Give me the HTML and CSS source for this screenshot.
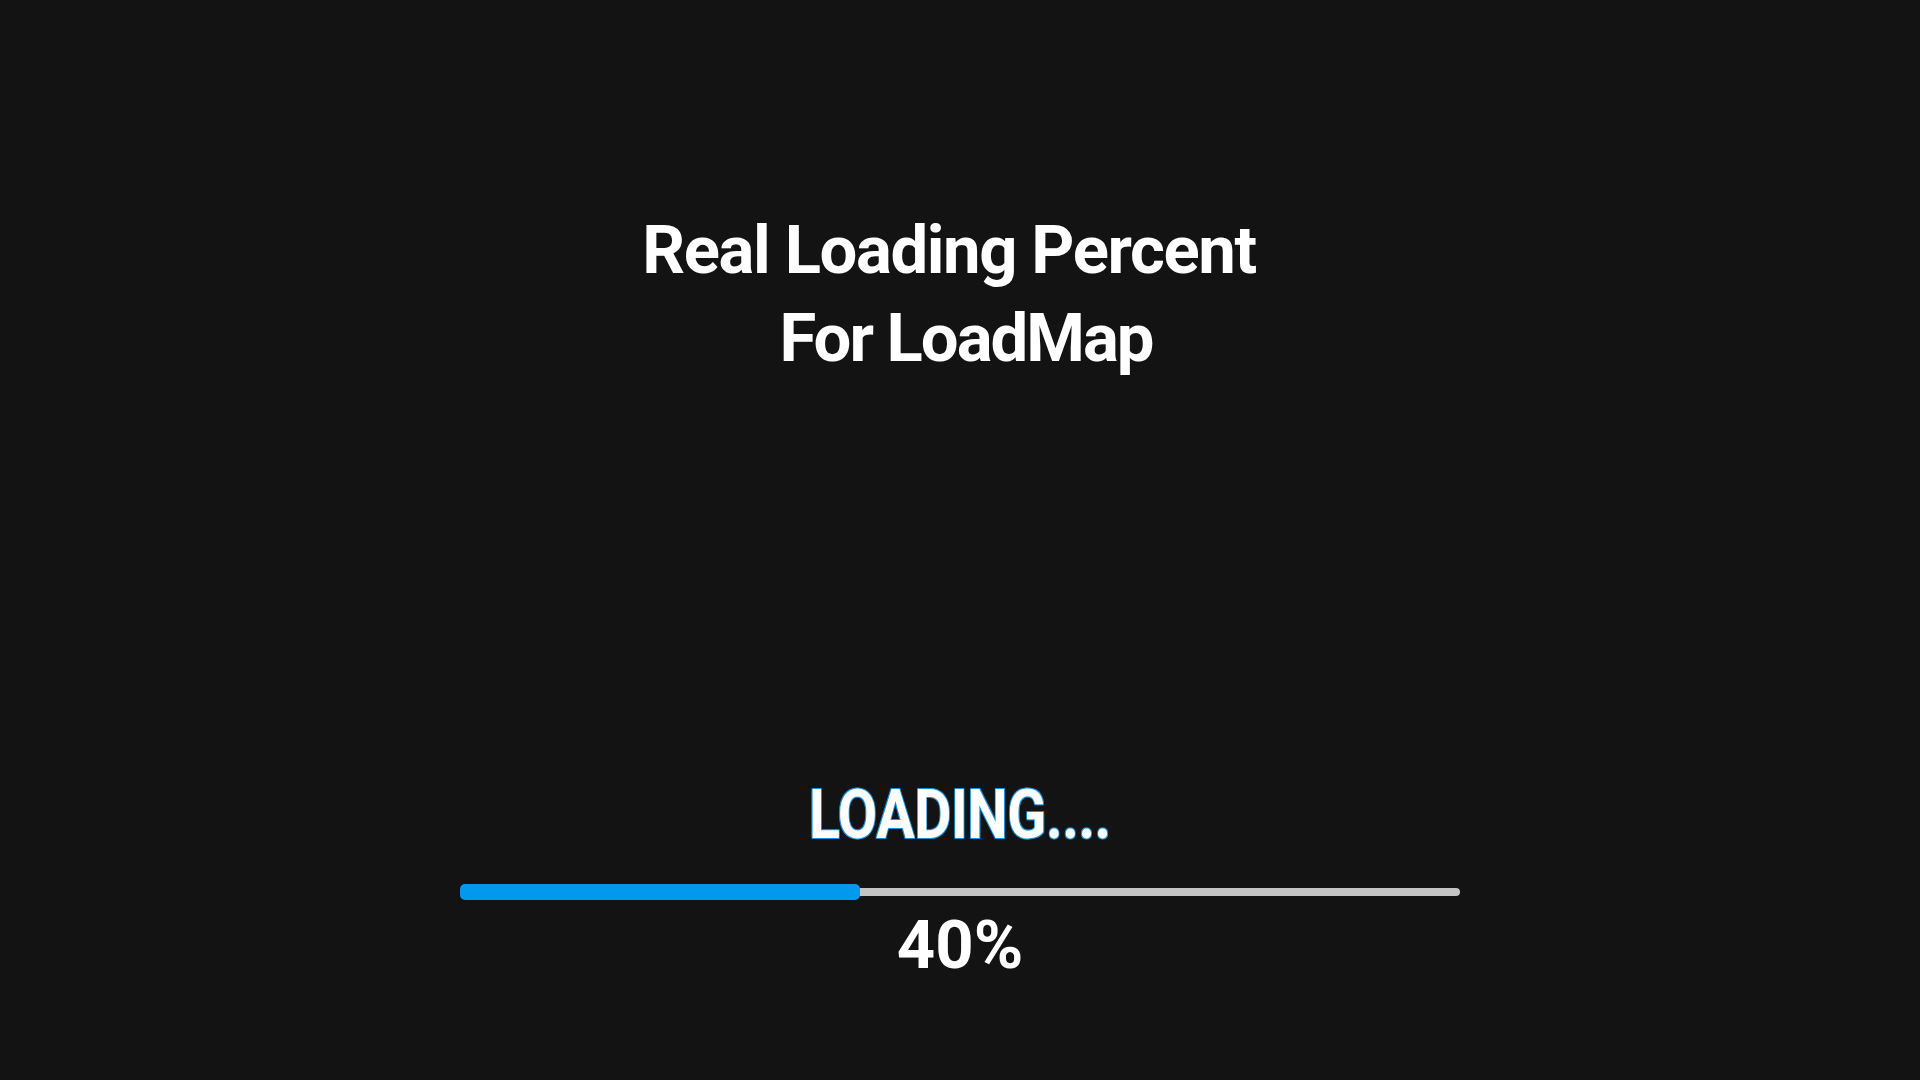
FILE: index.html
```html
<!DOCTYPE html>
<html lang="en">
<head>
    <meta charset="UTF-8">
    <meta name="viewport" content="width=device-width, initial-scale=1.0">
    <title>LoadMap</title>
    <link rel="stylesheet" href="styles.css">
</head>
<body>
    <main class="screen">
        <h1 class="title">
            <span class="title-first">Real Loading Percent</span>
            <span class="title-second">For LoadMap</span>
        </h1>

        <section class="loader">
            <div class="loader-label">LOADING....</div>
            <div class="progress">
                <div class="progress-fill" style="width: 40%"></div>
            </div>
            <div class="loader-percent">40%</div>
        </section>
    </main>
</body>
</html>
```

FILE: styles.css
```css
/* General Styling */
* {
    margin: 0;
    padding: 0;
    box-sizing: border-box;
}

body {
    background: #131313;
    color: #ffffff;
    font-family: 'Roboto', 'DejaVu Sans', sans-serif;
    height: 100vh;
    overflow: hidden;
}

.screen {
    display: flex;
    flex-direction: column;
    align-items: center;
    height: 100%;
}

/* Title */
.title {
    margin-top: 206px;
    display: flex;
    flex-direction: column;
    align-items: center;
    font-size: 67px;
    line-height: 88px;
    font-weight: bold;
    letter-spacing: -1.4px;
}

.title-first {
    padding-right: 22px;
}

.title-second {
    padding-left: 12px;
    letter-spacing: -2px;
}

/* Loader */
.loader {
    margin-top: 393px;
    width: 1000px;
    display: flex;
    flex-direction: column;
    align-items: center;
}

.loader-label {
    font-size: 69px;
    line-height: 80px;
    font-weight: bold;
    letter-spacing: -0.5px;
    transform: scaleX(0.83);
    color: #ffffff;
    text-shadow:
        -1px -1px 0 #1a8fd6,
        1px -1px 0 #1a8fd6,
        -1px 1px 0 #1a8fd6,
        1px 1px 0 #1a8fd6;
}

.progress {
    margin-top: 33px;
    width: 100%;
    height: 8px;
    border-radius: 4px;
    background: #c4c4c4;
    display: flex;
    align-items: center;
}

.progress-fill {
    height: 16px;
    border-radius: 5px;
    background: #0099ee;
}

.loader-percent {
    margin-top: 9px;
    font-size: 67px;
    line-height: 80px;
    font-weight: bold;
}
```
